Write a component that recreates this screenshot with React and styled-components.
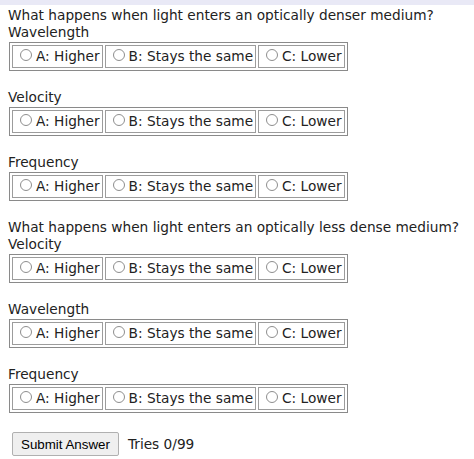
import React, { useState } from "react";
import styled, { createGlobalStyle } from "styled-components";

const GlobalStyle = createGlobalStyle`
  body {
    margin: 0;
    background: #fff;
    font-family: "DejaVu Sans", Verdana, sans-serif;
    font-size: 13.7px;
    color: #222;
  }
`;

const TopStrip = styled.div`
  height: 5px;
  background: #e9e9f6;
`;

const Page = styled.div`
  padding: 2px 8px 0;
  line-height: 17px;
`;

const Label = styled.div`
  margin-top: ${(p) => (p.$first ? "0" : "18px")};
`;

const Choices = styled.table`
  border: 1px solid #8a8a8a;
  border-spacing: 2px;
  margin: 1px 0 0 1px;
`;

const Cell = styled.td`
  border: 1px solid #9c9c9c;
  padding: 2px 2px 2px 1px;
  white-space: nowrap;
`;

const Option = styled.label`
  display: flex;
  align-items: center;
  cursor: pointer;
`;

const Radio = styled.input.attrs({ type: "radio" })`
  appearance: none;
  flex: none;
  width: 12px;
  height: 12px;
  margin: -4px 4px 0 6px;
  border: 1px solid #8e8e8e;
  border-radius: 50%;
  background: #fff;
  &:checked {
    background: radial-gradient(circle, #333 30%, #fff 40%);
  }
`;

const Footer = styled.div`
  display: flex;
  align-items: center;
  gap: 9px;
  margin-top: 19px;
  padding-left: 4px;
`;

const Button = styled.button`
  font-family: "Liberation Sans", Arial, sans-serif;
  font-size: 13.33px;
  line-height: 15px;
  color: #000;
  background: #efefef;
  border: 1px solid #b0b0b0;
  border-radius: 2px;
  padding: 4px 8px 3px;
`;

const questions = [
  {
    text: "What happens when light enters an optically denser medium?",
    parts: ["Wavelength", "Velocity", "Frequency"],
  },
  {
    text: "What happens when light enters an optically less dense medium?",
    parts: ["Velocity", "Wavelength", "Frequency"],
  },
];

const options = ["A: Higher", "B: Stays the same", "C: Lower"];

const App = () => {
  const [answers, setAnswers] = useState({});

  return (
    <>
      <GlobalStyle />
      <TopStrip />
      <Page>
        {questions.map((q, qi) => (
          <div key={qi}>
            <Label $first={qi === 0}>{q.text}</Label>
            {q.parts.map((part, pi) => {
              const name = `q${qi}-${pi}`;
              return (
                <div key={name}>
                  <Label $first={pi === 0}>{part}</Label>
                  <Choices>
                    <tbody>
                      <tr>
                        {options.map((opt) => (
                          <Cell key={opt}>
                            <Option>
                              <Radio
                                name={name}
                                checked={answers[name] === opt}
                                onChange={() =>
                                  setAnswers({ ...answers, [name]: opt })
                                }
                              />
                              {opt}
                            </Option>
                          </Cell>
                        ))}
                      </tr>
                    </tbody>
                  </Choices>
                </div>
              );
            })}
          </div>
        ))}
        <Footer>
          <Button>Submit Answer</Button>
          <span>Tries 0/99</span>
        </Footer>
      </Page>
    </>
  );
};

export default App;
